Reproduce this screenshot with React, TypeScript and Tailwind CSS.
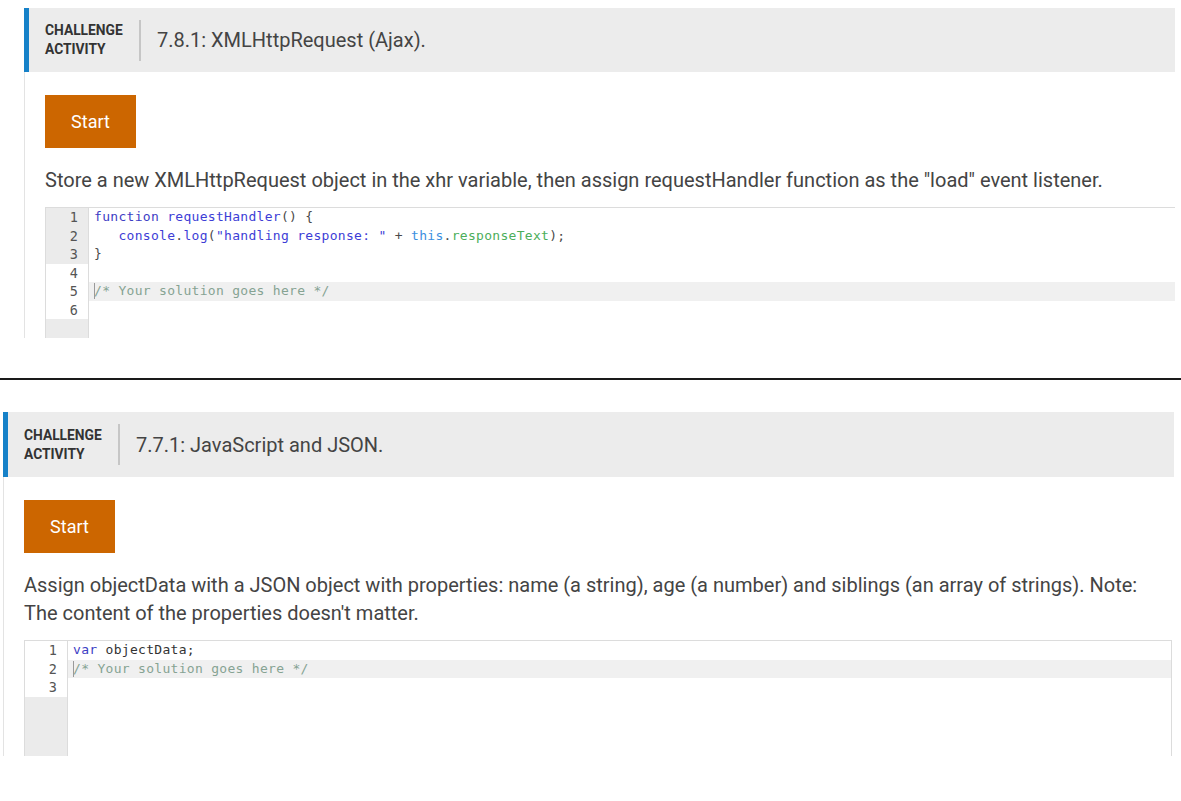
import React from "react";

type Kind = "kw" | "fn" | "p" | "this" | "prop" | "cm" | "txt";
type Tok = { t: string; k: Kind };

const tokColor: Record<Kind, string> = {
  kw: "text-[#3d3dc4]",
  fn: "text-[#3d3dd6]",
  p: "text-[#4a4a4a]",
  this: "text-[#3c8fe0]",
  prop: "text-[#4cae5a]",
  cm: "text-[#86a393]",
  txt: "text-[#333]",
};

type Line = { toks: Tok[]; gutterGray: boolean; active?: boolean };

function CodeEditor({ lines, height, bordered }: { lines: Line[]; height: string; bordered?: boolean }) {
  return (
    <div
      className={`flex overflow-hidden border-t border-[#dcdcdc] ${bordered ? "border-r mr-[2px]" : ""} ${height}`}
      style={{ fontFamily: '"DejaVu Sans Mono", "Liberation Mono", monospace' }}
    >
      {/* gutter */}
      <div className="w-[44px] shrink-0 bg-[#ebebeb] border-r border-l border-[#dcdcdc] flex flex-col">
        {lines.map((l, i) => (
          <div
            key={i}
            className={`h-[18.5px] leading-[18.5px] text-right pr-[10px] text-[13.5px] text-[#555] ${
              l.gutterGray ? "bg-[#ebebeb]" : "bg-white"
            }`}
          >
            {i + 1}
          </div>
        ))}
      </div>
      {/* code */}
      <div className="flex-1 flex flex-col">
        {lines.map((l, i) => (
          <div
            key={i}
            className={`h-[18.5px] leading-[18.5px] pl-[5px] text-[13px] tracking-[0.3px] whitespace-pre flex items-center ${
              l.active ? "bg-[#f0f0f0]" : ""
            }`}
          >
            {l.active && <span className="w-px h-[16px] bg-[#9a9a9a] -mr-px" />}
            <span>
              {l.toks.map((tk, j) => (
                <span key={j} className={tokColor[tk.k]}>
                  {tk.t}
                </span>
              ))}
            </span>
          </div>
        ))}
      </div>
    </div>
  );
}

function Activity({
  title,
  children,
  headerH,
}: {
  title: string;
  children: React.ReactNode;
  headerH: string;
}) {
  return (
    <div style={{ fontFamily: "Roboto, 'Liberation Sans', sans-serif" }}>
      <div className={`flex items-center bg-[#ececec] border-l-[5px] border-[#1681c8] pl-[16px] ${headerH}`}>
        <div className="w-[79px] text-[13.8px] font-bold leading-[19px] text-[#333] uppercase whitespace-nowrap">
          <div>Challenge</div>
          <div>Activity</div>
        </div>
        <div className="ml-[15px] w-[2px] h-[41px] bg-[#c6c6c6]" />
        <div className="ml-[16px] text-[20px] text-[#444]">{title}</div>
      </div>
      <div className="border-l border-[#e3e3e3] pl-[20px] pt-[23px]">
        <button className="w-[91px] h-[53px] bg-[#cc6600] text-white text-[18px]">Start</button>
        {children}
      </div>
    </div>
  );
}

export default function App() {
  const lines1: Line[] = [
    {
      gutterGray: true,
      toks: [
        { t: "function", k: "kw" },
        { t: " ", k: "p" },
        { t: "requestHandler", k: "fn" },
        { t: "() {", k: "p" },
      ],
    },
    {
      gutterGray: true,
      toks: [
        { t: "   ", k: "p" },
        { t: "console", k: "fn" },
        { t: ".", k: "p" },
        { t: "log", k: "fn" },
        { t: "(", k: "p" },
        { t: '"handling response: "', k: "fn" },
        { t: " + ", k: "p" },
        { t: "this", k: "this" },
        { t: ".", k: "p" },
        { t: "responseText", k: "prop" },
        { t: ");", k: "p" },
      ],
    },
    { gutterGray: true, toks: [{ t: "}", k: "p" }] },
    { gutterGray: false, toks: [] },
    { gutterGray: false, active: true, toks: [{ t: "/* Your solution goes here */", k: "cm" }] },
    { gutterGray: false, toks: [] },
  ];

  const lines2: Line[] = [
    {
      gutterGray: false,
      toks: [
        { t: "var", k: "kw" },
        { t: " objectData;", k: "txt" },
      ],
    },
    { gutterGray: false, active: true, toks: [{ t: "/* Your solution goes here */", k: "cm" }] },
    { gutterGray: false, toks: [] },
  ];

  return (
    <div className="w-[1181px] h-[801px] bg-white overflow-hidden">
      <div className="pl-[24px] pr-[6px] pt-[8px]">
        <Activity title="7.8.1: XMLHttpRequest (Ajax)." headerH="h-[64px]">
          <p className="mt-[18px] text-[20px] leading-[28px] text-[#444]">
            Store a new XMLHttpRequest object in the xhr variable, then assign requestHandler function as the "load"
            event listener.
          </p>
          <div className="mt-[13px]">
            <CodeEditor lines={lines1} height="h-[131px]" />
          </div>
        </Activity>
      </div>

      <div className="mt-[40px] h-[2px] bg-[#1a1a1a]" />

      <div className="pl-[3px] pr-[7px] mt-[32px]">
        <Activity title="7.7.1: JavaScript and JSON." headerH="h-[65px]">
          <p className="mt-[18px] text-[20px] leading-[28px] text-[#444] pr-[20px]">
            Assign objectData with a JSON object with properties: name (a string), age (a number) and siblings (an
            array of strings). Note: The content of the properties doesn't matter.
          </p>
          <div className="mt-[13px]">
            <CodeEditor lines={lines2} height="h-[116px]" bordered />
          </div>
        </Activity>
      </div>
    </div>
  );
}
